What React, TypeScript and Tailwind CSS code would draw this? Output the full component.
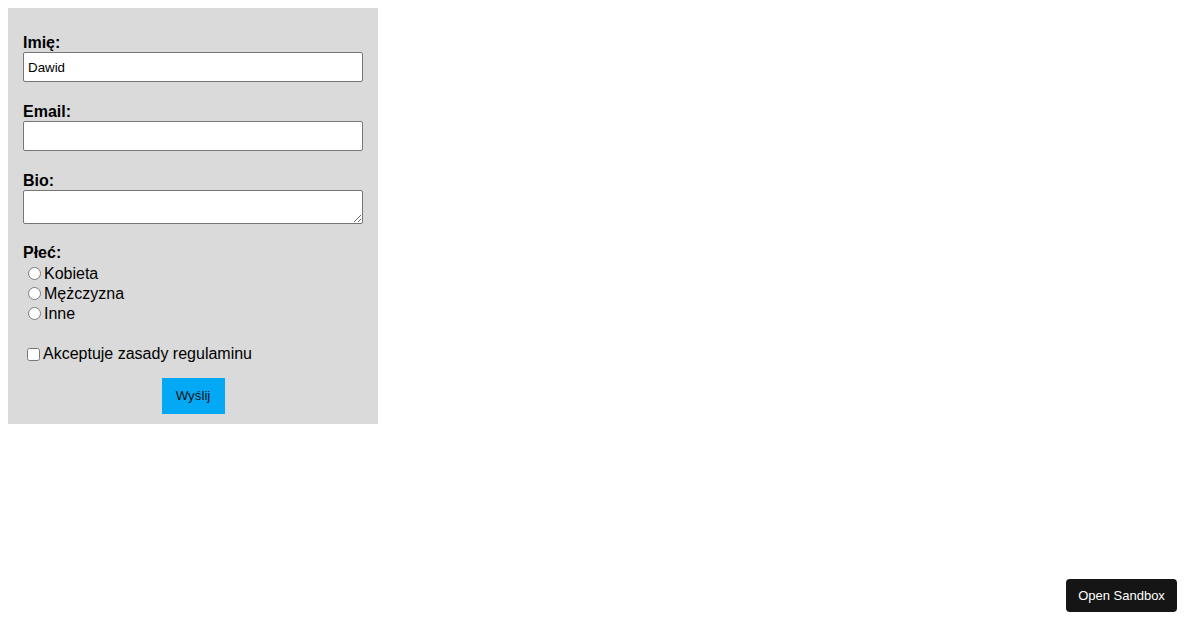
import React, { useState } from 'react';

const font = "font-['Liberation_Sans',Arial,sans-serif]";

export default function App() {
    const [name, setName] = useState('Dawid');
    const [email, setEmail] = useState('');
    const [bio, setBio] = useState('');
    const [gender, setGender] = useState('');
    const [accepted, setAccepted] = useState(false);

    return (
        <div className={`min-h-[630px] w-full bg-white p-2 text-black ${font}`}>
            <form
                className="w-[370px] bg-[#dadada] px-[15px] pt-[26px] pb-[10px]"
                onSubmit={(e) => e.preventDefault()}
            >
                {/* Imię */}
                <div className="mb-[21px]">
                    <label className="block h-[18px] text-[16px] font-bold leading-[18px]">Imię:</label>
                    <input
                        value={name}
                        onChange={(e) => setName(e.target.value)}
                        className="block h-[30px] w-[340px] rounded-[2px] border border-[#767676] bg-white px-[4px] text-[13.33px]"
                    />
                </div>

                {/* Email */}
                <div className="mb-[21px]">
                    <label className="block h-[18px] text-[16px] font-bold leading-[18px]">Email:</label>
                    <input
                        type="email"
                        value={email}
                        onChange={(e) => setEmail(e.target.value)}
                        className="block h-[30px] w-[340px] rounded-[2px] border border-[#767676] bg-white px-[4px] text-[13.33px]"
                    />
                </div>

                {/* Bio */}
                <div className="mb-[20px]">
                    <label className="block h-[18px] text-[16px] font-bold leading-[18px]">Bio:</label>
                    <textarea
                        value={bio}
                        onChange={(e) => setBio(e.target.value)}
                        className="block h-[34px] w-[340px] resize rounded-[2px] border border-[#767676] bg-white px-[4px] text-[13.33px]"
                    />
                </div>

                {/* Płeć */}
                <div className="mb-[20px]">
                    <label className="block h-[18px] text-[16px] font-bold leading-[18px]">Płeć:</label>
                    <div className="pt-[2px]">
                        {['Kobieta', 'Mężczyzna', 'Inne'].map((g) => (
                            <label key={g} className="flex h-5 items-start text-[16px] leading-5">
                                <input
                                    type="radio"
                                    name="gender"
                                    checked={gender === g}
                                    onChange={() => setGender(g)}
                                    className="mt-[3px] ml-[5px] mr-[3px] h-[13px] w-[13px]"
                                />
                                {g}
                            </label>
                        ))}
                    </div>
                </div>

                {/* Regulamin */}
                <label className="flex h-5 items-center text-[16px]">
                    <input
                        type="checkbox"
                        checked={accepted}
                        onChange={(e) => setAccepted(e.target.checked)}
                        className="ml-[4px] mr-[3px] h-[13px] w-[13px]"
                    />
                    Akceptuje zasady regulaminu
                </label>

                <div className="mt-[14px] flex justify-center">
                    <button
                        type="submit"
                        className="h-[36px] w-[63px] bg-[#03a9f4] text-[13.33px] text-[#111]"
                    >
                        Wyślij
                    </button>
                </div>
            </form>

            <button className="fixed right-[23px] bottom-[18px] h-[33px] w-[111px] rounded-[4px] bg-[#151515] text-[13px] text-white">
                Open Sandbox
            </button>
        </div>
    );
}
